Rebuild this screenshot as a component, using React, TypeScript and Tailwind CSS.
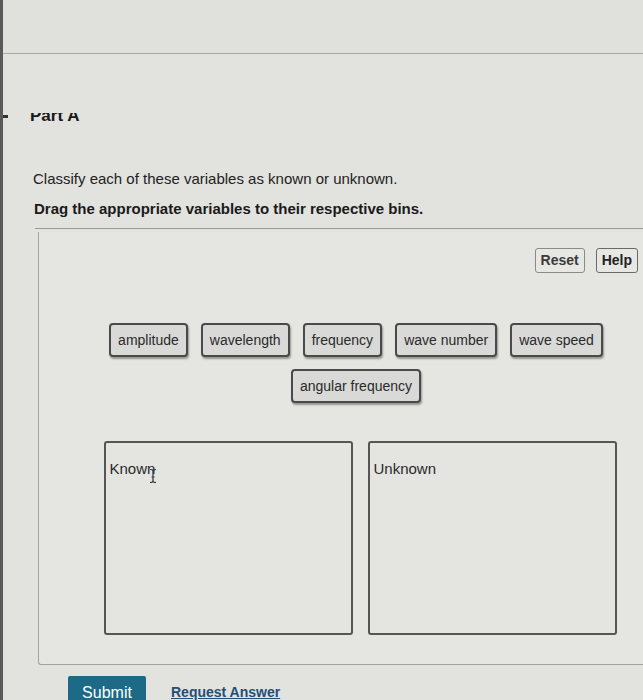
import React from 'react';

const font = { fontFamily: '"Liberation Sans", Arial, sans-serif' };

const row1 = ['amplitude', 'wavelength', 'frequency', 'wave number', 'wave speed'];

function Chip({ label }: { label: string }) {
  return (
    <div className="h-[34px] px-[7px] flex items-center rounded-[4px] border-2 border-[#4a4a4a] bg-[#d9d9d7] text-[14px] text-[#2a2a2a] shadow-[1px_2px_2px_rgba(0,0,0,0.35)]">
      {label}
    </div>
  );
}

function Bin({ label, children }: { label: string; children?: React.ReactNode }) {
  return (
    <div className="relative w-[249px] h-[194px] rounded-[3px] border-2 border-[#555] bg-[#e4e4e1] px-[4px] pt-[15px] text-[15px] text-[#2a2a2a]">
      {label}
      {children}
    </div>
  );
}

export default function App() {
  return (
    <div
      className="w-[643px] h-[700px] overflow-hidden bg-[#e2e2df] border-l-[3px] border-[#5a5a5a]"
      style={font}
    >
      {/* top bar */}
      <div className="h-[54px] border-b border-[#a8a8a5] bg-[#e0e0dd]" />

      {/* Part A, its top hidden under the scroll edge */}
      <div className="mt-[59px] h-[8px] overflow-hidden relative">
        <span className="absolute left-0 top-[2px] h-[3px] w-[5px] bg-[#333]" />
        <span className="absolute left-[27px] bottom-[-3px] text-[17px] font-bold leading-none text-[#1a1a1a] whitespace-nowrap">
          Part A
        </span>
      </div>

      <p className="ml-[30px] mt-[48px] text-[15px] text-[#222] leading-[20px]">
        Classify each of these variables as known or unknown.
      </p>
      <p className="ml-[31px] mt-[10px] text-[15px] font-bold text-[#1a1a1a] leading-[20px]">
        Drag the appropriate variables to their respective bins.
      </p>

      <div className="ml-[32px] mt-[9px] border-t border-[#9a9a97] pt-[3px]">
        <div className="ml-[3px] border-l border-b border-[#a2a29f] rounded-bl-[3px] bg-[#e5e5e2] pb-[29px]">
          <div className="flex justify-end gap-[11px] pt-[16px] pr-[5px]">
            <button className="h-[25px] px-[5px] rounded-[3px] border border-[#8a8a88] bg-[#e7e7e4] text-[14px] font-bold text-[#3a3a3a]">
              Reset
            </button>
            <button className="h-[25px] px-[5px] rounded-[3px] border border-[#6a6a68] bg-[#e7e7e4] text-[14px] font-bold text-[#222]">
              Help
            </button>
          </div>

          <div className="mt-[50px] flex flex-col items-center gap-[12px] pl-[30px]">
            <div className="flex gap-[13px]">
              {row1.map((l) => (
                <Chip key={l} label={l} />
              ))}
            </div>
            <Chip label="angular frequency" />
          </div>

          <div className="mt-[38px] flex justify-center gap-[15px] pl-[38px]">
            <Bin label="Known">
              <svg
                className="absolute left-[42px] top-[25px]"
                width="10"
                height="16"
                viewBox="0 0 10 16"
                fill="none"
                stroke="#333"
                strokeWidth="1.2"
              >
                <path d="M2 1.5c1.5 0 3 .5 3 1.5 0-1 1.5-1.5 3-1.5M5 3v10M2 14.5c1.5 0 3-.5 3-1.5 0 1 1.5 1.5 3 1.5M3.5 9h3" />
              </svg>
            </Bin>
            <Bin label="Unknown" />
          </div>
        </div>
      </div>

      <div className="ml-[65px] mt-[11px] flex items-end gap-[25px]">
        <button className="h-[30px] w-[78px] rounded-t-[2px] bg-[#1d6a86] pt-[3px] text-[16px] text-white">
          Submit
        </button>
        <a className="pb-[3px] text-[14px] font-bold text-[#1f4f78] underline">Request Answer</a>
      </div>
    </div>
  );
}
